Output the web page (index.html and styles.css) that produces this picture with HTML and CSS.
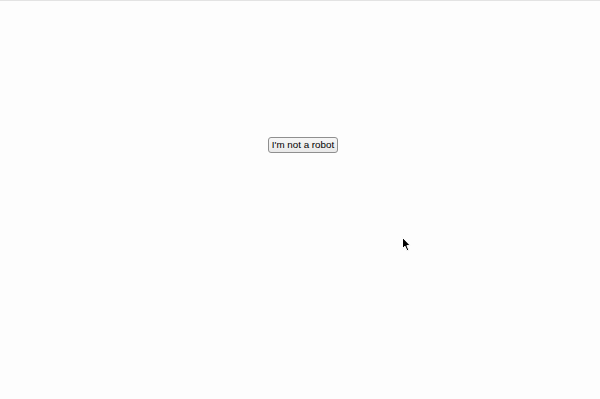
FILE: index.html
```html
<!DOCTYPE html>
<html>
<head>
<meta charset="utf-8">
<link rel="stylesheet" href="styles.css">
</head>
<body>
<div class="page">
  <div class="stage">
    <button class="robot-btn" type="button">I'm not a robot</button>
  </div>
  <svg class="cursor" width="10" height="15" viewBox="0 0 10 15">
    <path d="M0.5 0.5 L0.5 11.5 L3 9.2 L5 13.8 L6.8 13 L4.9 8.6 L8.3 8.6 Z" fill="#000" stroke="#fff" stroke-width="1"/>
  </svg>
</div>
</body>
</html>
```
FILE: styles.css
```css
html, body {
  margin: 0;
  padding: 0;
  background: #fdfdfd;
}
.page {
  position: relative;
  width: 600px;
  height: 399px;
  border-top: 1px solid #e3e3e3;
  box-sizing: border-box;
  overflow: hidden;
}
.stage {
  padding-top: 136px;
  padding-left: 268px;
}
.robot-btn {
  display: block;
  font-family: "Liberation Sans", Arial, sans-serif;
  font-size: 9.8px;
  line-height: 12px;
  color: #000;
  background: linear-gradient(#f6f6f6, #e9e9e9);
  border: 1px solid #8f8f8f;
  border-radius: 3px;
  padding: 1px 2px;
  width: 70px;
  height: 16px;
  box-sizing: border-box;
  margin: 0;
  white-space: nowrap;
  text-align: center;
}
.cursor {
  position: absolute;
  left: 402px;
  top: 236px;
}
```
